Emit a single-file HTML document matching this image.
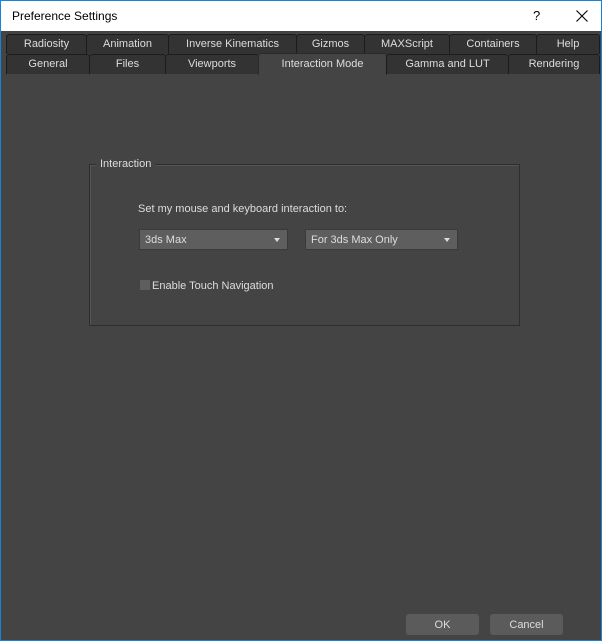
<!DOCTYPE html>
<html><head><style>
*{margin:0;padding:0;box-sizing:border-box}
body{width:602px;height:641px;overflow:hidden;font-family:"Liberation Sans",sans-serif;font-size:11px;background:#444;position:relative}
.win{position:absolute;left:0;top:0;width:602px;height:641px;border:1px solid #1883d7;border-top:none;background:#444}
.title{position:absolute;left:0;top:0;width:602px;height:31px;background:#fff;border-top:1px solid #1883d7;border-left:1px solid #1883d7;border-right:1px solid #1883d7}
.title span{position:absolute;left:11px;top:8px;font-size:12px;color:#000}
.q{position:absolute;left:532px;top:7px;font-size:13px;color:#000}
.x{position:absolute;left:575px;top:9px}
.t{position:absolute;height:20px;background:#333;border:1px solid #1c1c1c;border-bottom:none;border-radius:3px 3px 0 0;color:#ddd;text-align:center;line-height:18px;font-size:11px}
.t.sel{background:#444;border-color:#2a2a2a;height:22px}
.grp{position:absolute;left:89px;top:164px;width:431px;height:162px;border:1px solid #2e2e2e;box-shadow:1px 1px 0 #555 inset}
.grp .lg{position:absolute;left:6px;top:-7px;background:#444;padding:0 4px;color:#ddd}
.lbl{position:absolute;color:#ddd}
.dd{position:absolute;height:21px;background:#5e5e5e;border:1px solid #3a3a3a;color:#ddd;padding-left:5px;line-height:21px}
.dd i{position:absolute;right:7px;top:8px;width:0;height:0;border-left:3px solid transparent;border-right:3px solid transparent;border-top:4px solid #ddd}
.cb{position:absolute;left:140px;top:280px;width:10px;height:10px;background:#5e5e5e}
.btn{position:absolute;top:614px;height:21px;background:#5b5b5b;border-radius:3px;color:#ddd;text-align:center;line-height:22px}
</style></head><body>
<div class="win"></div>
<div class="title"><span>Preference Settings</span><div class="q">?</div>
<svg class="x" width="12" height="12" viewBox="0 0 12 12"><path d="M0.5 0.5L11.5 11.5M11.5 0.5L0.5 11.5" stroke="#000" stroke-width="1.1"/></svg></div>
<div class="t" style="left:6px;top:34px;width:81px">Radiosity</div>
<div class="t" style="left:86px;top:34px;width:83px">Animation</div>
<div class="t" style="left:168px;top:34px;width:129px">Inverse Kinematics</div>
<div class="t" style="left:296px;top:34px;width:69px">Gizmos</div>
<div class="t" style="left:364px;top:34px;width:86px">MAXScript</div>
<div class="t" style="left:449px;top:34px;width:88px">Containers</div>
<div class="t" style="left:536px;top:34px;width:64px">Help</div>
<div class="t" style="left:6px;top:54px;width:84px">General</div>
<div class="t" style="left:89px;top:54px;width:77px">Files</div>
<div class="t" style="left:165px;top:54px;width:94px">Viewports</div>
<div class="t sel" style="left:258px;top:53px;width:129px;line-height:20px">Interaction Mode</div>
<div class="t" style="left:386px;top:54px;width:123px">Gamma and LUT</div>
<div class="t" style="left:508px;top:54px;width:92px">Rendering</div>
<div class="grp"><span class="lg">Interaction</span></div>
<div class="lbl" style="left:138px;top:203px">Set my mouse and keyboard interaction to:</div>
<div class="dd" style="left:139px;top:229px;width:149px">3ds Max<i></i></div>
<div class="dd" style="left:305px;top:229px;width:153px">For 3ds Max Only<i></i></div>
<div class="cb"></div>
<div class="lbl" style="left:152px;top:280px">Enable Touch Navigation</div>
<div class="btn" style="left:406px;width:73px">OK</div>
<div class="btn" style="left:490px;width:73px">Cancel</div>
</body></html>
